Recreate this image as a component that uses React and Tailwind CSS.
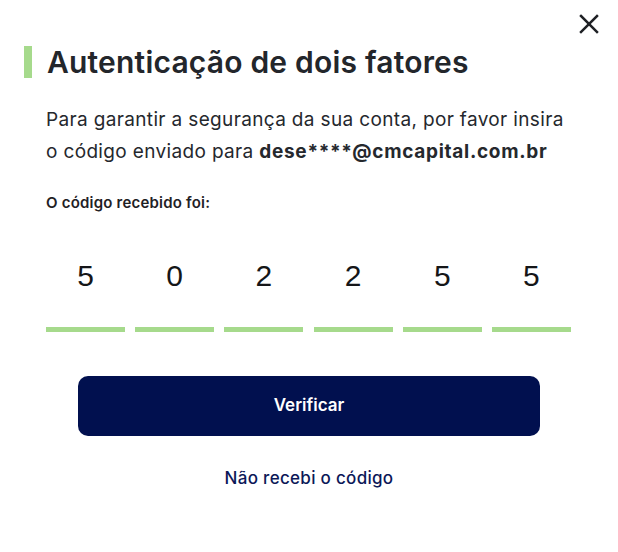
import { useState } from 'react';

const digits = ['5', '0', '2', '2', '5', '5'];

export default function App() {
  const [code] = useState(digits);

  return (
    <div className="relative h-[552px] w-[618px] bg-white font-['Inter',sans-serif] text-[#23262b]">
      {/* Close */}
      <button
        type="button"
        aria-label="Fechar"
        className="absolute right-[17px] top-[12px] flex h-6 w-6 items-center justify-center text-[#1f2125]"
      >
        <svg width="20" height="20" viewBox="0 0 20 20" fill="none" stroke="currentColor" strokeWidth="2.5" strokeLinecap="square">
          <path d="M2 2 18 18" />
          <path d="M18 2 2 18" />
        </svg>
      </button>

      <div className="pt-[46px]">
        <div className="flex items-center gap-[15px] pl-6">
          <span className="h-8 w-2 bg-[#a6da8c]" />
          <h2 className="text-[30px] font-semibold leading-8 tracking-[0.2px]">Autenticação de dois fatores</h2>
        </div>

        <div className="pl-[46px] pr-[46px]">
          <p className="mt-[26px] text-[19px] leading-8 tracking-[0.35px] text-[#25282d]">
            Para garantir a segurança da sua conta, por favor insira o código enviado para{' '}
            <strong className="font-bold tracking-[0.7px]">dese****@cmcapital.com.br</strong>
          </p>

          <p className="mt-[25px] text-[15px] font-semibold leading-5 tracking-[0.2px] text-[#1f2125]">O código recebido foi:</p>

          <div className="mt-[45px] flex w-[525px] justify-between">
            {code.map((d, i) => (
              <div key={i} className="flex w-[79px] flex-col items-center">
                <span className="font-['Liberation_Sans',Arial,sans-serif] text-[30px] leading-9 text-[#151618]">{d}</span>
                <span className="mt-[33px] h-[5px] w-full bg-[#a6da8c]" />
              </div>
            ))}
          </div>
        </div>

        <button
          type="button"
          className="mx-auto mt-[44px] flex h-[60px] w-[462px] items-center justify-center rounded-[10px] bg-[#01104f] text-[17px] font-semibold text-white"
        >
          Verificar
        </button>

        <div className="mt-[30px] flex justify-center">
          <button type="button" className="text-[17px] font-medium tracking-[0.3px] text-[#0c1858]">
            Não recebi o código
          </button>
        </div>
      </div>
    </div>
  );
}
